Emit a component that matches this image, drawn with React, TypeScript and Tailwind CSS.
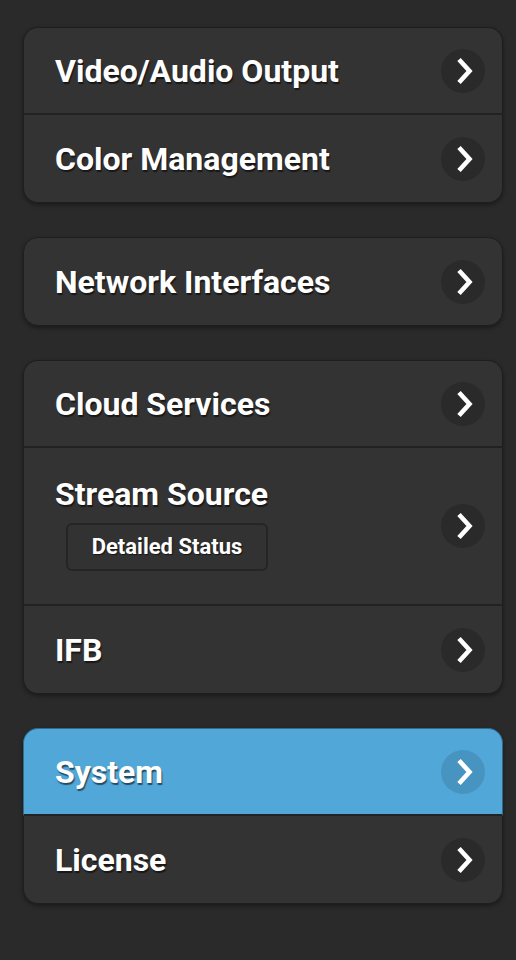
import React from 'react';

type Item = {
  label: string;
  active?: boolean;
  extra?: React.ReactNode;
};

const groups: Item[][] = [
  [{ label: 'Video/Audio Output' }, { label: 'Color Management' }],
  [{ label: 'Network Interfaces' }],
  [
    { label: 'Cloud Services' },
    { label: 'Stream Source', extra: 'Detailed Status' },
    { label: 'IFB' },
  ],
  [{ label: 'System', active: true }, { label: 'License' }],
];

const Chevron: React.FC<{ active?: boolean }> = ({ active }) => (
  <div
    className={`flex h-[44px] w-[44px] shrink-0 items-center justify-center rounded-full ${
      active ? 'bg-[#4894c0]' : 'bg-[#2a2a2a]'
    }`}
  >
    <svg width="20" height="28" viewBox="0 0 20 28" className="ml-[3px]">
      <path d="M4 2.5 L14.5 14 L4 25.5" fill="none" stroke="#fff" strokeWidth="4.6" strokeLinecap="butt" strokeLinejoin="miter" />
    </svg>
  </div>
);

// each row draws its own edge so the selected one can take a blue outline
const Row: React.FC<{ item: Item; first: boolean; last: boolean }> = ({ item, first, last }) => {
  let height = 'h-[87px]';
  if (item.extra) height = 'h-[158px]';
  else if (first && last) height = 'h-[89px]';
  else if (first || last) height = 'h-[88px]';

  return (
    <div
      className={`flex items-center justify-between border-x pl-[31px] pr-[17px] ${height} ${
        item.active ? 'bg-[#52a7d9] border-x-[#2e6b8f]' : 'bg-[#333333] border-x-[#1e1e1e]'
      } ${first ? 'rounded-t-[15px] border-t' : ''} ${
        first && item.active ? 'border-t-[#2e6b8f]' : 'border-t-[#1e1e1e]'
      } ${last ? 'rounded-b-[15px] border-b border-b-[#1e1e1e]' : 'border-b-2 border-b-[#222222]'}`}
    >
      <div className="flex flex-col items-start">
        <span className="text-[32px] font-bold leading-none text-white [text-shadow:1px_2px_1px_rgba(0,0,0,0.55)]">
          {item.label}
        </span>
        {item.extra && (
          <button className="ml-[11px] mt-[13px] mb-[4px] flex h-[48px] w-[202px] items-center justify-center rounded-[6px] border-2 border-[#252525] bg-[#323232] text-[22px] font-bold text-white [text-shadow:1px_1px_1px_rgba(0,0,0,0.6)]">
            {item.extra}
          </button>
        )}
      </div>
      <Chevron active={item.active} />
    </div>
  );
};

const App: React.FC = () => {
  return (
    <div
      className="min-h-screen w-[516px] bg-[#2a2a2a] pl-[23px] pr-[13px] pt-[27px] pb-[40px]"
      style={{ fontFamily: 'Roboto, "Liberation Sans", sans-serif' }}
    >
      <div className="flex flex-col gap-[34px]">
        {groups.map((group, gi) => (
          <div key={gi} className="rounded-[15px] shadow-[0_2px_4px_rgba(0,0,0,0.4)]">
            {group.map((item, i) => (
              <Row key={item.label} item={item} first={i === 0} last={i === group.length - 1} />
            ))}
          </div>
        ))}
      </div>
    </div>
  );
};

export default App;
